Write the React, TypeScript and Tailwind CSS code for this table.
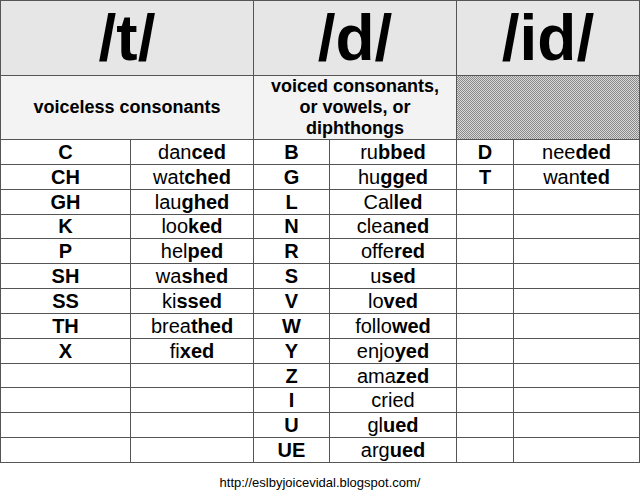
import React from 'react';

type Word = { plain: string; bold: string } | null;
type Row = { t?: string; tw?: Word; d?: string; dw?: Word; id?: string; idw?: Word };

const w = (plain: string, bold: string): Word => ({ plain, bold });

const rows: Row[] = [
  { t: 'C', tw: w('dan', 'ced'), d: 'B', dw: w('ru', 'bbed'), id: 'D', idw: w('nee', 'ded') },
  { t: 'CH', tw: w('wat', 'ched'), d: 'G', dw: w('hu', 'gged'), id: 'T', idw: w('wan', 'ted') },
  { t: 'GH', tw: w('lau', 'ghed'), d: 'L', dw: w('Cal', 'led') },
  { t: 'K', tw: w('loo', 'ked'), d: 'N', dw: w('clea', 'ned') },
  { t: 'P', tw: w('hel', 'ped'), d: 'R', dw: w('offe', 'red') },
  { t: 'SH', tw: w('wa', 'shed'), d: 'S', dw: w('u', 'sed') },
  { t: 'SS', tw: w('ki', 'ssed'), d: 'V', dw: w('lo', 'ved') },
  { t: 'TH', tw: w('brea', 'thed'), d: 'W', dw: w('follo', 'wed') },
  { t: 'X', tw: w('fi', 'xed'), d: 'Y', dw: w('enjo', 'yed') },
  { d: 'Z', dw: w('ama', 'zed') },
  { d: 'I', dw: w('cried', '') },
  { d: 'U', dw: w('gl', 'ued') },
  { d: 'UE', dw: w('arg', 'ued') },
];

const cell = 'border-r border-b border-[#555] flex items-center justify-center h-[24.85px] text-[20px] leading-none';

const WordCell = ({ word }: { word?: Word }) => (
  <div className={cell}>
    {word && (
      <span>
        {word.plain}
        <b className="font-bold">{word.bold}</b>
      </span>
    )}
  </div>
);

const LetterCell = ({ text }: { text?: string }) => (
  <div className={cell + ' font-bold'}>{text}</div>
);

export default function App() {
  return (
    <div className="w-[640px] h-[497px] bg-white text-black" style={{ fontFamily: '"Liberation Sans", Arial, sans-serif' }}>
      <div className="grid grid-cols-[130px_123px_76px_127px_57px_126px] border-l border-t border-[#555] w-[640px]">
        {/* header */}
        <div className="col-span-2 h-[75px] border-r border-b border-[#555] bg-[#e6e6e6] flex items-center justify-center text-[64px] font-bold leading-none">/t/</div>
        <div className="col-span-2 h-[75px] border-r border-b border-[#555] bg-[#e6e6e6] flex items-center justify-center text-[64px] font-bold leading-none">/d/</div>
        <div className="col-span-2 h-[75px] border-r border-b border-[#555] bg-[#e6e6e6] flex items-center justify-center text-[64px] font-bold leading-none">/id/</div>

        {/* sub header */}
        <div className="col-span-2 h-[64px] border-r border-b border-[#555] bg-[#f3f3f3] flex items-center justify-center text-[18px] font-bold">voiceless consonants</div>
        <div className="col-span-2 h-[64px] border-r border-b border-[#555] bg-[#f3f3f3] flex items-center justify-center text-center text-[18px] font-bold leading-[21px]">
          voiced consonants,
          <br />
          or vowels, or
          <br />
          diphthongs
        </div>
        <div className="col-span-2 h-[64px] border-r border-b border-[#555] bg-[repeating-conic-gradient(#8a8a8a_0_25%,#d8d8d8_0_50%)] bg-[length:2px_2px]" />

        {rows.map((r, i) => (
          <React.Fragment key={i}>
            <LetterCell text={r.t} />
            <WordCell word={r.tw} />
            <LetterCell text={r.d} />
            <WordCell word={r.dw} />
            <LetterCell text={r.id} />
            <WordCell word={r.idw} />
          </React.Fragment>
        ))}
      </div>

      <div className="mt-[13px] text-center text-[13px] leading-none">http://eslbyjoicevidal.blogspot.com/</div>
    </div>
  );
}
